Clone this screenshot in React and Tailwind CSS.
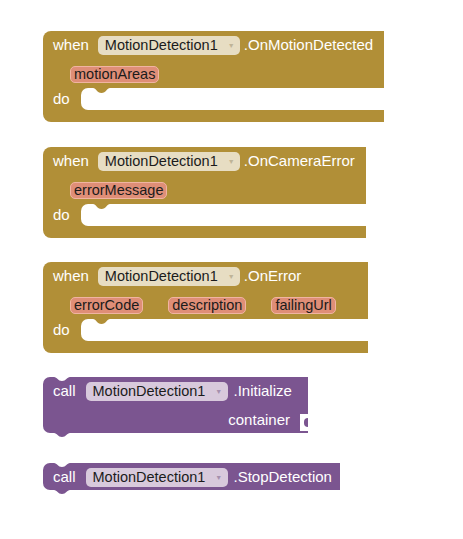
const FONT = { fontFamily: '"Liberation Sans", Arial, sans-serif' };

function Dropdown({ label, tone }) {
  const box =
    tone === 'gold'
      ? 'bg-[#e7ddc3] text-[#1b1b1b]'
      : 'bg-[#d8c9dc] text-[#1b1b1b]';
  const arrow = tone === 'gold' ? 'text-[#bfb497]' : 'text-[#a690ae]';
  return (
    <div className={`flex h-[19px] w-[142px] items-center rounded-[5px] pl-[7px] text-[14.5px] ${box}`}>
      <span className="leading-[19px]">{label}</span>
      <span className={`ml-[10px] text-[7px] leading-none ${arrow}`}>▼</span>
    </div>
  );
}

function Param({ name }) {
  return (
    <div className="flex h-[17px] items-center rounded-[5px] border border-[#f0b4a2] bg-[#df8e77] px-[3px] text-[14.5px] leading-[15px] text-[#1b1b1b]">
      {name}
    </div>
  );
}

function EventBlock({ event, params, className }) {
  return (
    <div className={`relative rounded-l-[8px] bg-[#b18f37] text-white ${className}`}>
      <div className="flex h-[29px] items-center pl-[10px]">
        <span>when</span>
        <div className="ml-[9px]">
          <Dropdown label="MotionDetection1" tone="gold" />
        </div>
        <span className="ml-[4px]">{event}</span>
      </div>
      <div className="flex h-[28px] items-center gap-[25px] pl-[27px]">
        {params.map((p) => (
          <Param key={p} name={p} />
        ))}
      </div>
      <div className="flex h-[22px]">
        <div className="flex w-[38px] items-center pl-[10px]">do</div>
        <div className="relative flex-1 rounded-l-[7px] bg-white">
          <svg className="absolute left-[12px] top-0" width="17" height="6" viewBox="0 0 17 6">
            <path d="M0 0 C3 0 4 5 8.5 5 C13 5 14 0 17 0 Z" fill="#b18f37" />
          </svg>
        </div>
      </div>
      <div className="h-[12px]" />
    </div>
  );
}

function CallNotches() {
  return (
    <>
      <svg className="absolute left-[11px] top-0" width="16" height="5" viewBox="0 0 16 5">
        <path d="M0 0 C3 0 4 4 8 4 C12 4 13 0 16 0 Z" fill="#ffffff" />
      </svg>
      <svg className="absolute left-[11px] top-full" width="16" height="5" viewBox="0 0 16 5">
        <path d="M0 0 C3 0 4 4 8 4 C12 4 13 0 16 0 Z" fill="#7b5590" />
      </svg>
    </>
  );
}

function CallHeader({ method }) {
  return (
    <div className="flex h-[28px] items-center pl-[10px]">
      <span>call</span>
      <div className="ml-[10px]">
        <Dropdown label="MotionDetection1" tone="purple" />
      </div>
      <span className="ml-[6px]">{method}</span>
    </div>
  );
}

export default function App() {
  return (
    <div
      className="flex h-[539px] w-[463px] flex-col items-start bg-white pl-[43px] pt-[31px] text-[15px]"
      style={FONT}
    >
      <EventBlock className="w-[341px]" event=".OnMotionDetected" params={['motionAreas']} />
      <EventBlock className="mt-[25px] w-[323px]" event=".OnCameraError" params={['errorMessage']} />
      <EventBlock
        className="mt-[24px] w-[325px]"
        event=".OnError"
        params={['errorCode', 'description', 'failingUrl']}
      />

      <div className="relative mt-[24px] w-[265px] rounded-l-[7px] bg-[#7b5590] text-white">
        <CallNotches />
        <CallHeader method=".Initialize" />
        <div className="relative flex h-[28px] items-center justify-end pb-[1px] pr-[18px] pt-[3px]">
          <span>container</span>
          <div className="absolute right-0 top-[9px] h-[17px] w-[8px] bg-white">
            <div className="absolute right-0 top-[4px] h-[9px] w-[4px] rounded-l-full bg-[#7b5590]" />
          </div>
        </div>
      </div>

      <div className="relative mt-[30px] w-[297px] rounded-l-[7px] bg-[#7b5590] text-white">
        <CallNotches />
        <div className="-mb-px">
          <CallHeader method=".StopDetection" />
        </div>
      </div>
    </div>
  );
}
